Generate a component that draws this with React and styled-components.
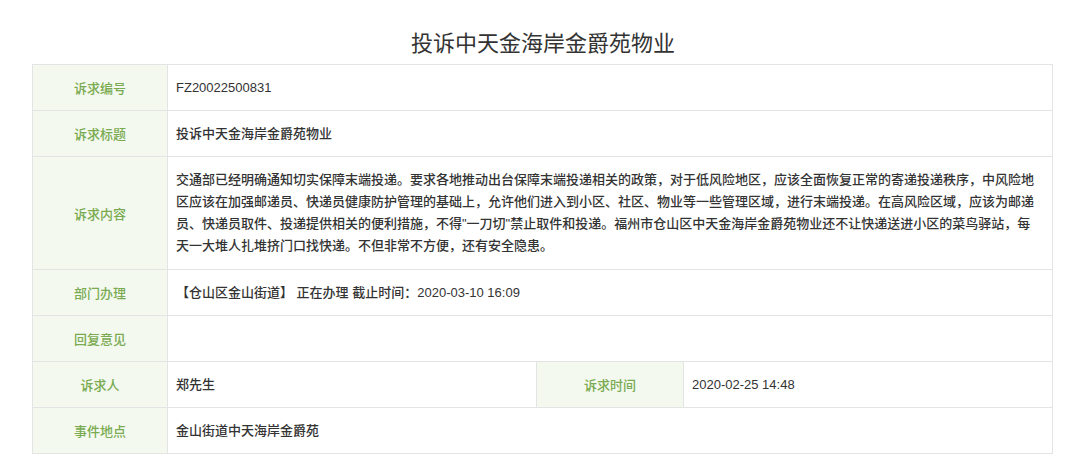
import { Fragment } from 'react'
import styled, { createGlobalStyle } from 'styled-components'

const GlobalStyle = createGlobalStyle`
  body {
    margin: 0;
    background: #ffffff;
    font-family: "Liberation Sans", "Noto Sans CJK SC", sans-serif;
  }
`

const Page = styled.div`
  width: 1080px;
  padding-top: 26px;
`

const Title = styled.h1`
  margin: 0 0 8px;
  text-align: center;
  font-family: "Noto Sans CJK SC", sans-serif;
  font-weight: 400;
  font-size: 22px;
  line-height: 30px;
  color: #333333;
  padding-left: 6px;
`

const Table = styled.div`
  margin-left: 32px;
  width: 1019px;
  display: grid;
  grid-template-columns: 134px 368px 146px 1fr;
  gap: 1px;
  background: #e4e4e4;
  border: 1px solid #e4e4e4;
`

const Label = styled.div`
  background: #f4f9ef;
  color: #7aab52;
  font-family: "Noto Sans CJK SC", sans-serif;
  font-weight: 500;
  font-size: 13px;
  min-height: ${(p) => (p.$tall ? '112px' : '45px')};
  display: flex;
  align-items: center;
  justify-content: center;
`

const Value = styled.div`
  grid-column: ${(p) => (p.$wide ? 'span 3' : 'span 1')};
  background: #ffffff;
  color: #333333;
  font-weight: 500;
  font-size: 13px;
  line-height: 22px;
  padding: 0 8px;
  display: flex;
  align-items: center;
`

const Paragraph = styled.p`
  margin: 0;
`

const rows = [
  { label: '诉求编号', value: 'FZ20022500831' },
  { label: '诉求标题', value: '投诉中天金海岸金爵苑物业' },
]

export default function App() {
  return (
    <Page>
      <GlobalStyle />
      <Title>投诉中天金海岸金爵苑物业</Title>
      <Table>
        {rows.map((r) => (
          <Fragment key={r.label}>
            <Label>{r.label}</Label>
            <Value $wide>{r.value}</Value>
          </Fragment>
        ))}
        <Label $tall>诉求内容</Label>
        <Value $wide>
          <Paragraph>
            交通部已经明确通知切实保障末端投递。要求各地推动出台保障末端投递相关的政策，对于低风险地区，应该全面恢复正常的寄递投递秩序，中风险地
            <br />
            区应该在加强邮递员、快递员健康防护管理的基础上，允许他们进入到小区、社区、物业等一些管理区域，进行末端投递。在高风险区域，应该为邮递
            <br />
            员、快递员取件、投递提供相关的便利措施，不得"一刀切"禁止取件和投递。福州市仓山区中天金海岸金爵苑物业还不让快递送进小区的菜鸟驿站，每
            <br />
            天一大堆人扎堆挤门口找快递。不但非常不方便，还有安全隐患。
          </Paragraph>
        </Value>
        <Label>部门办理</Label>
        <Value $wide>【仓山区金山街道】 正在办理 截止时间：2020-03-10 16:09</Value>
        <Label>回复意见</Label>
        <Value $wide />
        <Label>诉求人</Label>
        <Value>郑先生</Value>
        <Label>诉求时间</Label>
        <Value>2020-02-25 14:48</Value>
        <Label>事件地点</Label>
        <Value $wide>金山街道中天海岸金爵苑</Value>
      </Table>
    </Page>
  )
}
